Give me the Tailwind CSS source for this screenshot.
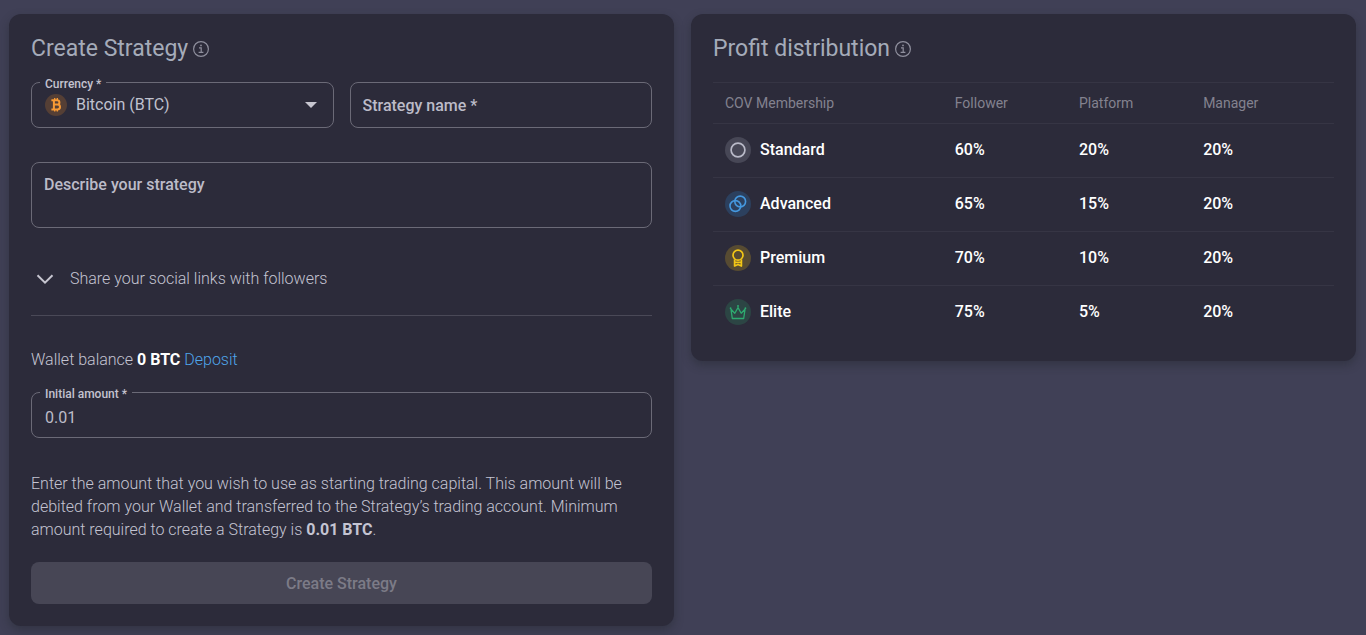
<!DOCTYPE html>
<html lang="en">
<head>
<meta charset="utf-8">
<meta name="viewport" content="width=device-width, initial-scale=1">
<title>Create Strategy</title>
<script src="https://cdn.jsdelivr.net/npm/@tailwindcss/browser@4"></script>
</head>
<body class="min-h-screen bg-[#404056] font-[Roboto,sans-serif] text-base text-[#c4c4d2] antialiased">
<main class="grid grid-cols-1 items-start gap-[17px] pt-[14px] pr-[10px] pb-2 pl-[9px] md:grid-cols-2">

  <section class="rounded-xl bg-[#2c2b3a] px-[22px] pt-[19px] pb-[22px] shadow-[0_4px_10px_rgba(30,35,40,0.4)]">
    <div class="flex items-center gap-1">
      <h1 class="text-[23px] leading-8 text-[#a5abb9]">Create Strategy</h1>
      <svg class="size-[18px] text-[#8f8f9d]" viewBox="0 0 18 18" fill="none" stroke="currentColor" stroke-width="1.2" aria-hidden="true"><circle cx="9" cy="9" r="7.4"/><path d="M7 7.8h2.200v4.400M6.600 12.300h4.800"/><circle cx="9" cy="5.400" r=".9" fill="currentColor" stroke="none"/></svg>
    </div>

    <form>
      <div class="mt-[17px] grid grid-cols-2 gap-4">
        <fieldset class="h-[46px] min-w-0 rounded-lg border border-[#6b6a77] pr-4 pl-2">
          <legend class="h-0 px-[5px] text-xs leading-[3px] font-medium text-[#c4c3cf]"><label for="currency">Currency *</label></legend>
          <div class="flex h-11 items-center pl-[5px]">
            <svg class="size-[22px] shrink-0" viewBox="0 0 22 22" aria-hidden="true"><circle cx="11" cy="11" r="11" fill="#553f35"/><g fill="none" stroke="#f79a35" stroke-width="2"><path d="M6.400 6.200h5.600c3.200 0 3.200 4.400 0 4.400H9M6.400 15.400h5.900c3.600 0 3.600-4.800 0-4.800M8.900 6.200v9.200"/><path d="M9.700 4v2M12.300 4v2M9.700 15.600v2M12.300 15.600v2" stroke-width="1.400"/></g></svg>
            <select id="currency" class="ml-[9px] min-w-0 flex-1 appearance-none bg-transparent text-[#c0c2cf] outline-none"><option>Bitcoin (BTC)</option></select>
            <svg class="h-[6px] w-3 shrink-0" viewBox="0 0 12 6" fill="#c7c6d0" aria-hidden="true"><path d="M0 0h12L6 6z"/></svg>
          </div>
        </fieldset>
        <input type="text" aria-label="Strategy name" placeholder="Strategy name *" class="h-[46px] w-full min-w-0 rounded-lg border border-[#6b6a77] bg-transparent px-3 font-medium outline-none placeholder:text-[#bcbbc8]">
      </div>

      <textarea aria-label="Describe your strategy" placeholder="Describe your strategy" class="mt-[34px] block h-[66px] w-full resize-none rounded-lg border border-[#6b6a77] bg-transparent px-3 py-[10px] font-medium outline-none placeholder:text-[#bcbbc8]"></textarea>

      <button type="button" class="mt-[39px] flex h-6 items-center gap-4 pl-[5px] font-light">
        <svg class="h-[10px] w-[18px]" viewBox="0 0 18 10" fill="none" stroke="#c7c6d0" stroke-width="2" aria-hidden="true"><path d="M1.500 1.200 9 8.600l7.500-7.400"/></svg>
        Share your social links with followers
      </button>
      <hr class="mt-6 border-[#4a4957]">

      <p class="mt-8 font-light">Wallet balance <strong class="font-bold text-white">0 BTC</strong> <a href="#deposit" class="text-[#4fa5ea]">Deposit</a></p>

      <fieldset class="mt-5 h-[46px] min-w-0 rounded-lg border border-[#6b6a77] px-2">
        <legend class="h-0 px-[5px] text-xs leading-[3px] font-medium text-[#c4c3cf]"><label for="amount">Initial amount *</label></legend>
        <input id="amount" type="text" value="0.01" class="h-12 w-full bg-transparent px-[5px] text-[#bcbbc8] outline-none">
      </fieldset>

      <p class="mt-[34px] leading-[23px] font-light">Enter the amount that you wish to use as starting trading capital. This amount will be debited from your Wallet and transferred to the Strategy’s trading account. Minimum amount required to create a Strategy is <strong class="font-bold">0.01 BTC</strong>.</p>

      <button type="submit" disabled class="mt-[21px] h-[42px] w-full rounded-lg bg-[#474655] pt-[2px] font-medium text-[#7c7b87]">Create Strategy</button>
    </form>
  </section>

  <section class="rounded-xl bg-[#2c2b3a] px-[22px] pt-[19px] pb-[21px] shadow-[0_4px_10px_rgba(30,35,40,0.4)]">
    <div class="flex items-center gap-1">
      <h2 class="text-[23px] leading-8 text-[#a5abb9]">Profit distribution</h2>
      <svg class="size-[18px] text-[#8f8f9d]" viewBox="0 0 18 18" fill="none" stroke="currentColor" stroke-width="1.2" aria-hidden="true"><circle cx="9" cy="9" r="7.4"/><path d="M7 7.800h2.200v4.400M6.600 12.300h4.800"/><circle cx="9" cy="5.400" r=".9" fill="currentColor" stroke="none"/></svg>
    </div>

    <table class="mt-[17px] w-full table-fixed text-left">
      <thead>
        <tr class="h-[41px] border-y border-[#363544] text-sm text-[#83828f]">
          <th scope="col" class="w-[37%] pl-3 font-normal">COV Membership</th>
          <th scope="col" class="w-[20%] pl-3 font-normal">Follower</th>
          <th scope="col" class="w-[20%] pl-3 font-normal">Platform</th>
          <th scope="col" class="w-[23%] pl-3 font-normal">Manager</th>
        </tr>
      </thead>
      <tbody class="divide-y divide-[#363544] font-medium text-white">
        <tr class="h-[54px]">
          <td class="pb-[2px] pl-3"><div class="flex items-center gap-[9px]"><svg class="size-[26px]" viewBox="0 0 26 26" fill="none" aria-hidden="true"><circle cx="13" cy="13" r="13" fill="#474756"/><circle cx="13" cy="13" r="6.900" stroke="#b9bac8" stroke-width="1.700"/></svg>Standard</div></td>
          <td class="pb-[2px] pl-3">60%</td><td class="pb-[2px] pl-3">20%</td><td class="pb-[2px] pl-3">20%</td>
        </tr>
        <tr class="h-[54px]">
          <td class="pb-[2px] pl-3"><div class="flex items-center gap-[9px]"><svg class="size-[26px]" viewBox="0 0 26 26" fill="none" aria-hidden="true"><circle cx="13" cy="13" r="13" fill="#2c405e"/><g stroke="#4598df" stroke-width="1.600"><circle cx="10.400" cy="15" r="5.400"/><circle cx="15.200" cy="10.500" r="5.400"/></g></svg>Advanced</div></td>
          <td class="pb-[2px] pl-3">65%</td><td class="pb-[2px] pl-3">15%</td><td class="pb-[2px] pl-3">20%</td>
        </tr>
        <tr class="h-[54px]">
          <td class="pb-[2px] pl-3"><div class="flex items-center gap-[9px]"><svg class="size-[26px]" viewBox="0 0 26 26" fill="none" aria-hidden="true"><circle cx="13" cy="13" r="13" fill="#574b32"/><g stroke="#f3c716" stroke-width="1.700" stroke-linejoin="round"><circle cx="13" cy="10.200" r="5"/><path d="M9.600 14.600v6.400l3.400-1.600 3.400 1.600v-6.400M9.600 17.400h6.800"/></g></svg>Premium</div></td>
          <td class="pb-[2px] pl-3">70%</td><td class="pb-[2px] pl-3">10%</td><td class="pb-[2px] pl-3">20%</td>
        </tr>
        <tr class="h-[54px]">
          <td class="pb-[2px] pl-3"><div class="flex items-center gap-[9px]"><svg class="size-[26px]" viewBox="0 0 26 26" fill="none" aria-hidden="true"><circle cx="13" cy="13" r="13" fill="#2c4544"/><path d="M7.300 19.500 6 10.300l3.800 3.900L13 8.600l3.200 5.600 3.800-3.900-1.300 9.200z" stroke="#2eaa70" stroke-width="1.300" stroke-linejoin="round"/><g fill="#2eaa70"><circle cx="5.600" cy="9.200" r=".9"/><circle cx="13" cy="7" r="1"/><circle cx="20.400" cy="9.200" r=".9"/></g></svg>Elite</div></td>
          <td class="pb-[2px] pl-3">75%</td><td class="pb-[2px] pl-3">5%</td><td class="pb-[2px] pl-3">20%</td>
        </tr>
      </tbody>
    </table>
  </section>
</main>
</body>
</html>
